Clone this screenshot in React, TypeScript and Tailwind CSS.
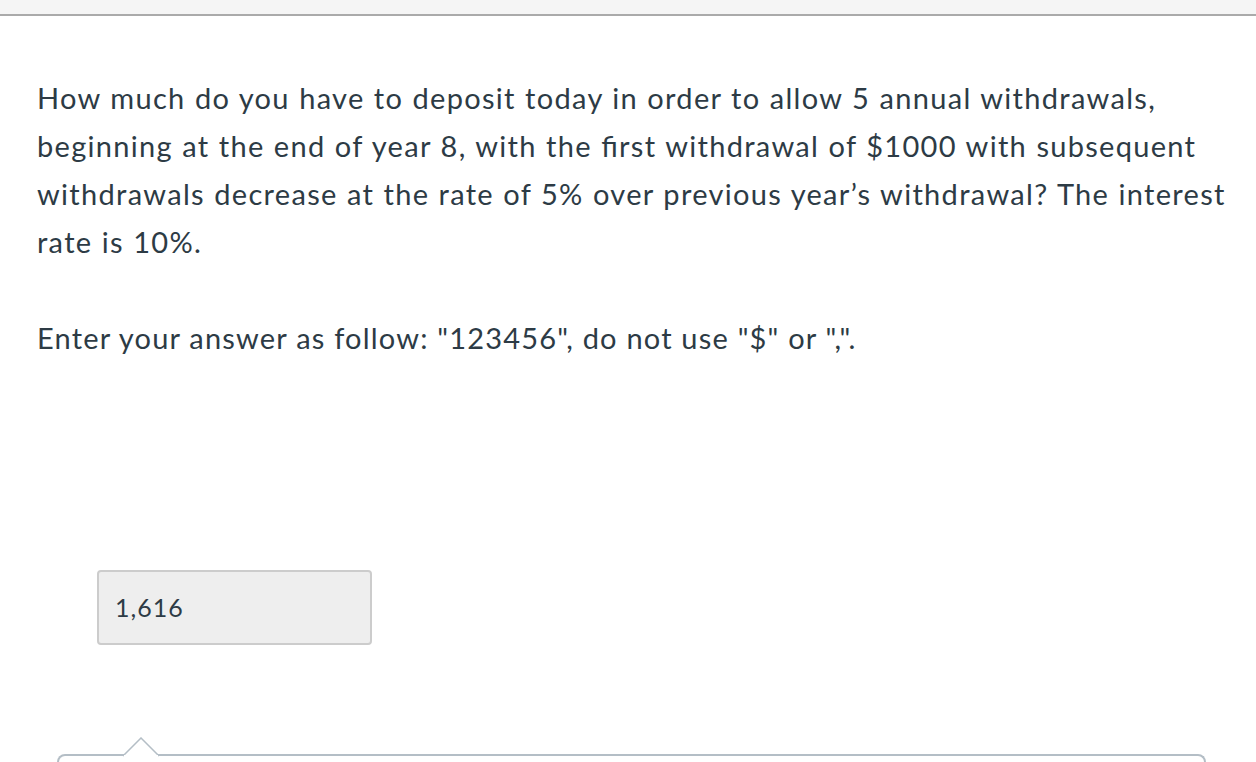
export default function App() {
  return (
    <div className="min-h-screen bg-white text-[#2d3b45]" style={{ fontFamily: "Lato, 'Liberation Sans', sans-serif" }}>
      <div className="h-[16px] bg-[#f5f5f5] border-b-2 border-[#aaaaaa]" />
      <div className="pl-[37px] pr-[26px] pt-[58px]">
        <p className="text-[29px] leading-[48px] tracking-[1.3px] [word-spacing:0.6px]">
          How much do you have to deposit today in order to allow 5 annual withdrawals, beginning at the end of year 8, with the ﬁrst withdrawal of $1000 with subsequent withdrawals decrease at the rate of 5% over previous year’s withdrawal? The interest rate is 10%.
        </p>
        <p className="mt-[48px] text-[29px] leading-[48px] tracking-[1.2px]">
          Enter your answer as follow: "123456", do not use "$" or ",".
        </p>
        <div className="mt-[208px] pl-[60px]">
          <div className="flex h-[75px] w-[275px] items-center rounded-[4px] border-2 border-[#cccccc] bg-[#eeeeee] px-[16px] text-[25px] tracking-[1px]">
            1,616
          </div>
        </div>
        <div className="relative mt-[109px] ml-[20px] mr-[24px] h-[40px] rounded-t-[8px] border-2 border-b-0 border-[#b4bec6]">
          <svg className="absolute -top-[19px] left-[62px]" width="40" height="20" viewBox="0 0 40 20">
            <path d="M2 19 L20 1 L38 19" fill="#ffffff" stroke="#b4bec6" strokeWidth="1.5" />
            <rect x="3" y="18" width="34" height="4" fill="#ffffff" />
          </svg>
        </div>
      </div>
    </div>
  );
}
